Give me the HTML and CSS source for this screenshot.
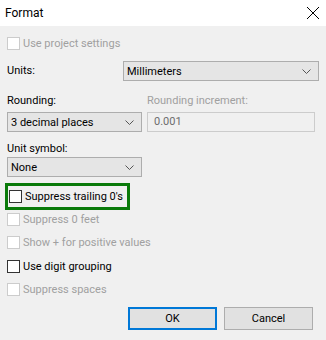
FILE: index.html
```html
<!DOCTYPE html>
<html lang="en">
<head>
    <meta charset="UTF-8">
    <title>Format</title>
    <link rel="stylesheet" href="styles.css">
</head>
<body>
<div class="dialog">
    <div class="titlebar">
        <span class="title">Format</span>
        <svg class="close" width="14" height="14" viewBox="0 0 14 14">
            <path d="M1 1 L13 13 M13 1 L1 13" stroke="#000" stroke-width="1" fill="none"/>
        </svg>
    </div>

    <div class="content">
        <div class="check disabled row-project"><span class="box"></span>Use project settings</div>

        <div class="units-row">
            <span class="label">Units:</span>
            <div class="combo units-combo"><span>Millimeters</span><svg class="arrow" width="9" height="5" viewBox="0 0 9 5"><path d="M0.5 0.5 L4.5 4.5 L8.5 0.5" stroke="#555" fill="none"/></svg></div>
        </div>

        <div class="rounding-row">
            <div class="field">
                <div class="label">Rounding:</div>
                <div class="combo small-combo"><span>3 decimal places</span><svg class="arrow" width="9" height="5" viewBox="0 0 9 5"><path d="M0.5 0.5 L4.5 4.5 L8.5 0.5" stroke="#555" fill="none"/></svg></div>
            </div>
            <div class="field">
                <div class="label muted">Rounding increment:</div>
                <div class="textbox">0.001</div>
            </div>
        </div>

        <div class="field symbol-field">
            <div class="label">Unit symbol:</div>
            <div class="combo small-combo"><span>None</span><svg class="arrow" width="9" height="5" viewBox="0 0 9 5"><path d="M0.5 0.5 L4.5 4.5 L8.5 0.5" stroke="#555" fill="none"/></svg></div>
        </div>

        <div class="highlight">
            <div class="check"><span class="box"></span>Suppress trailing 0's</div>
        </div>

        <div class="options">
            <div class="check disabled"><span class="box"></span>Suppress 0 feet</div>
            <div class="check disabled"><span class="box"></span>Show + for positive values</div>
            <div class="check"><span class="box"></span>Use digit grouping</div>
            <div class="check disabled"><span class="box"></span>Suppress spaces</div>
        </div>

        <div class="buttons">
            <button class="btn default">OK</button>
            <button class="btn">Cancel</button>
        </div>
    </div>
</div>
</body>
</html>
```

FILE: styles.css
```css
body {
    margin: 0;
    font-family: Roboto, sans-serif;
    font-size: 11px;
    color: #000;
    background-color: #f0f0f0;
}
.dialog {
    width: 326px;
    height: 340px;
    background-color: #f0f0f0;
}
.titlebar {
    height: 26px;
    background-color: #fff;
    display: flex;
    align-items: center;
    justify-content: space-between;
    padding: 0 6px 0 5px;
}
.title {
    font-size: 12px;
}
.content {
    padding: 6px 8px 0 7px;
}
.label {
    line-height: 16px;
}
.muted {
    color: #a0a0a0;
}
.check {
    display: flex;
    align-items: center;
    height: 23px;
    white-space: nowrap;
}
.check .box {
    flex: none;
    width: 13px;
    height: 13px;
    box-sizing: border-box;
    border: 1px solid #333;
    background-color: #fff;
    margin-right: 3px;
}
.check.disabled {
    color: #a0a0a0;
}
.check.disabled .box {
    border-color: #ccc;
}
.units-row {
    display: flex;
    align-items: center;
    justify-content: space-between;
    margin-top: 6px;
}
.combo {
    height: 20px;
    box-sizing: border-box;
    border: 1px solid #adadad;
    background-color: #e5e5e5;
    display: flex;
    align-items: center;
    justify-content: space-between;
    padding: 0 7px 0 3px;
}
.units-combo {
    width: 196px;
    margin-right: -1px;
}
.small-combo {
    width: 135px;
}
.rounding-row {
    display: flex;
    gap: 5px;
    margin-top: 12px;
}
.field .label {
    margin-bottom: 3px;
}
.textbox {
    width: 168px;
    height: 20px;
    box-sizing: border-box;
    border: 1px solid #ccc;
    color: #6d6d6d;
    padding: 0 6px;
    line-height: 18px;
}
.symbol-field {
    margin-top: 9px;
}
.symbol-field .label {
    margin-bottom: 0;
}
.highlight {
    width: 125px;
    box-sizing: border-box;
    border: 3px solid #0a7a0a;
    margin: 6px 0 0 -2px;
    padding-left: 1px;
}
.highlight .check {
    height: 21px;
}
.options {
    margin-top: -2.5px;
}
.options .check {
    height: 23.5px;
}
.buttons {
    display: flex;
    justify-content: flex-end;
    gap: 7px;
    margin-top: 5.5px;
    padding-right: 5px;
}
.btn {
    width: 89px;
    height: 23px;
    box-sizing: border-box;
    border: 1px solid #adadad;
    background-color: #e1e1e1;
    font-family: Roboto, sans-serif;
    font-size: 11px;
    color: #000;
    padding: 0;
}
.btn.default {
    border: 2px solid #0078d7;
}
```
